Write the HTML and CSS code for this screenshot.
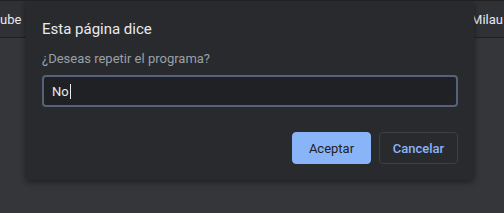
FILE: index.html
```html
<!DOCTYPE html>
<html lang="es">
<head>
  <meta charset="UTF-8" />
  <title>Esta página dice</title>
  <link rel="stylesheet" href="styles.css">
</head>
<body>
  <div class="topbar">
    <span class="tab left">ube</span>
    <span class="tab right">Milau</span>
  </div>

  <div class="dialog">
    <div class="title">Esta página dice</div>
    <div class="msg">¿Deseas repetir el programa?</div>
    <div class="field"><span class="value">No</span><span class="caret"></span></div>
    <div class="actions">
      <button class="btn primary">Aceptar</button>
      <button class="btn">Cancelar</button>
    </div>
  </div>
</body>
</html>
```

FILE: styles.css
```css
body {
  margin: 0;
  background: #35363a;
  font-family: Roboto, "Liberation Sans", sans-serif;
  height: 212px;
  overflow: hidden;
  position: relative;
  border-top: 1px solid #202124;
}
.topbar {
  height: 36px;
  background: #303135;
  border-bottom: 1px solid #1f2023;
  display: flex;
  justify-content: space-between;
  align-items: center;
}
.tab {
  color: #e8eaed;
  font-size: 13px;
}
.tab.left { margin-left: 0; }
.tab.right { margin-right: 1px; }
.dialog {
  position: absolute;
  left: 26px;
  top: 0;
  width: 416px;
  height: 163px;
  padding: 0 16px 16px 16px;
  background: #292a2d;
  border-radius: 0 0 4px 4px;
  box-shadow: 0 2px 6px rgba(0,0,0,0.45);
  display: flex;
  flex-direction: column;
}
.title {
  color: #e8eaed;
  font-size: 15px;
  margin-top: 19px;
  line-height: 18px;
}
.msg {
  color: #9aa0a6;
  font-size: 13px;
  margin-top: 13px;
  line-height: 16px;
}
.field {
  margin-top: 8px;
  height: 28px;
  border: 2px solid #56627a;
  border-radius: 4px;
  background: #202124;
  display: flex;
  align-items: center;
  padding-left: 8px;
}
.value {
  color: #e8eaed;
  font-size: 13px;
}
.caret {
  width: 1px;
  height: 15px;
  background: #e8eaed;
  margin-left: 1px;
}
.actions {
  margin-top: auto;
  display: flex;
  justify-content: flex-end;
  gap: 8px;
}
.btn {
  width: 79px;
  height: 32px;
  border: 1px solid #3c4043;
  border-radius: 4px;
  background: transparent;
  color: #8ab4f8;
  font-family: Roboto, "Liberation Sans", sans-serif;
  font-size: 13px;
  font-weight: 500;
  padding: 0;
}
.btn.primary {
  background: #8ab4f8;
  border-color: #8ab4f8;
  color: #202124;
  font-weight: 400;
}
```
